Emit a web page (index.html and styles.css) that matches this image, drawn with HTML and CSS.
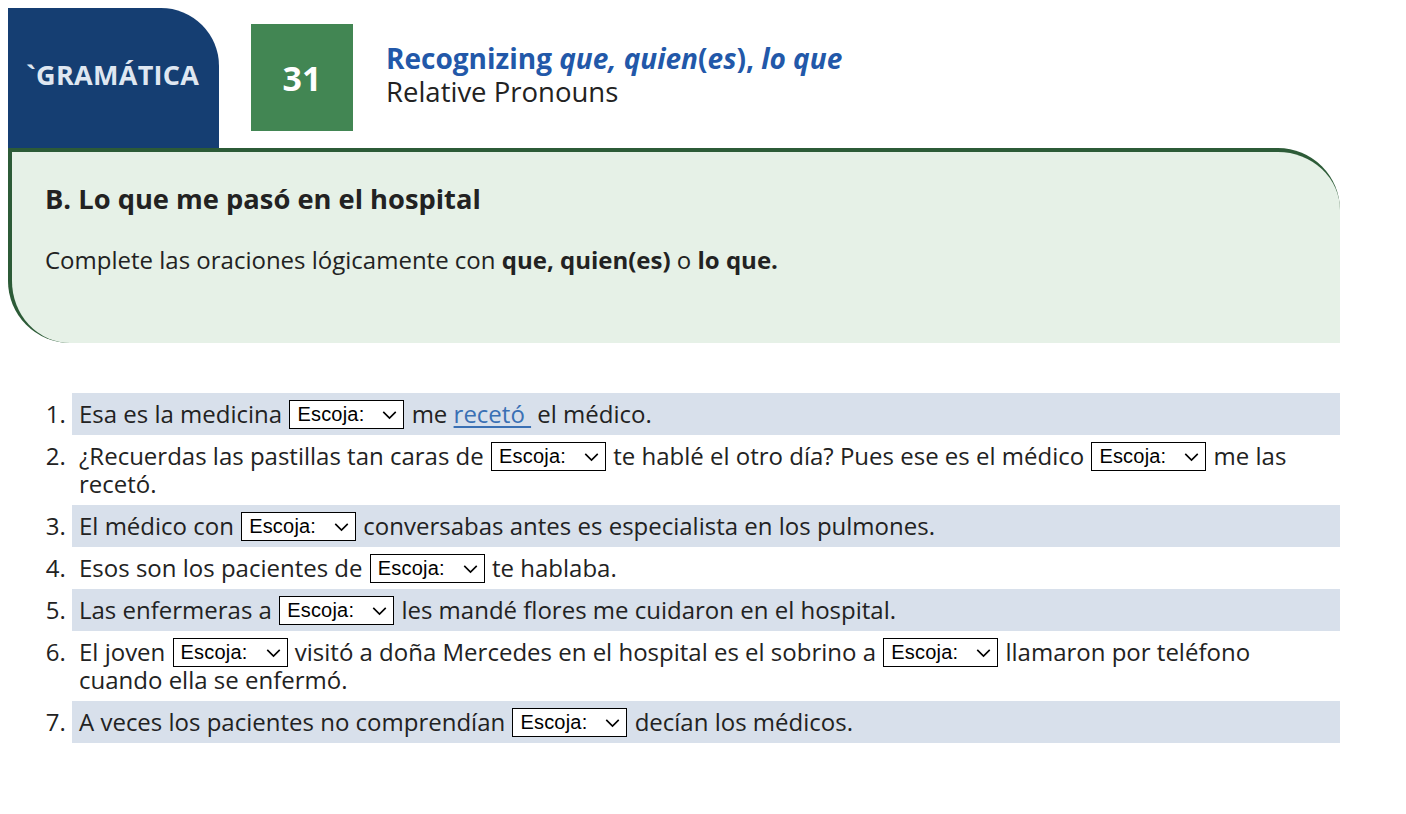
FILE: index.html
```html
<!DOCTYPE html>
<html lang="es">
<head>
<meta charset="utf-8">
<title>Gramática 31</title>
<link rel="stylesheet" href="styles.css">
</head>
<body>
<header class="hdr">
  <div class="tab"><span>`GRAMÁTICA</span></div>
  <div class="num">31</div>
  <div class="titles">
    <div class="t1">Recognizing <em>que, quien</em>(<em>es</em>), <em>lo que</em></div>
    <div class="t2">Relative Pronouns</div>
  </div>
</header>
<section class="box">
  <h2>B. Lo que me pasó en el hospital</h2>
  <p>Complete las oraciones lógicamente con <b>que, quien(es)</b> o <b>lo que.</b></p>
</section>
<ol class="items">
  <li class="alt">Esa es la medicina <span class="sel"><select><option>Escoja:</option><option>que</option><option>quien</option><option>quienes</option><option>lo que</option></select><svg viewBox="0 0 12 8"><path d="M1 1.5 6 6.5 11 1.5"/></svg></span> me <a href="#">recetó&nbsp;</a> el médico.</li>
  <li>¿Recuerdas las pastillas tan caras de <span class="sel"><select><option>Escoja:</option></select><svg viewBox="0 0 12 8"><path d="M1 1.5 6 6.5 11 1.5"/></svg></span> te hablé el otro día? Pues ese es el médico <span class="sel"><select><option>Escoja:</option></select><svg viewBox="0 0 12 8"><path d="M1 1.5 6 6.5 11 1.5"/></svg></span> me las recetó.</li>
  <li class="alt">El médico con <span class="sel"><select><option>Escoja:</option></select><svg viewBox="0 0 12 8"><path d="M1 1.5 6 6.5 11 1.5"/></svg></span> conversabas antes es especialista en los pulmones.</li>
  <li>Esos son los pacientes de <span class="sel"><select><option>Escoja:</option></select><svg viewBox="0 0 12 8"><path d="M1 1.5 6 6.5 11 1.5"/></svg></span> te hablaba.</li>
  <li class="alt">Las enfermeras a <span class="sel"><select><option>Escoja:</option></select><svg viewBox="0 0 12 8"><path d="M1 1.5 6 6.5 11 1.5"/></svg></span> les mandé flores me cuidaron en el hospital.</li>
  <li>El joven <span class="sel"><select><option>Escoja:</option></select><svg viewBox="0 0 12 8"><path d="M1 1.5 6 6.5 11 1.5"/></svg></span> visitó a doña Mercedes en el hospital es el sobrino a <span class="sel"><select><option>Escoja:</option></select><svg viewBox="0 0 12 8"><path d="M1 1.5 6 6.5 11 1.5"/></svg></span> llamaron por teléfono cuando ella se enfermó.</li>
  <li class="alt">A veces los pacientes no comprendían <span class="sel"><select><option>Escoja:</option></select><svg viewBox="0 0 12 8"><path d="M1 1.5 6 6.5 11 1.5"/></svg></span> decían los médicos.</li>
</ol>
</body>
</html>
```
FILE: styles.css
```css
html, body {
  background: #ffffff;
}
body {
  margin: 8px;
  width: 1332px;
  font-family: "Open Sans", "Noto Sans", sans-serif;
  color: #222222;
}
.hdr {
  display: flex;
  align-items: flex-start;
  height: 140px;
}
.tab {
  width: 211px;
  height: 140px;
  background: #153e72;
  border-top-right-radius: 58px;
  display: flex;
  align-items: flex-start;
  padding-top: 50px;
  padding-left: 18px;
  box-sizing: border-box;
}
.tab span {
  color: #dfe7f1;
  font-weight: 700;
  font-size: 27px;
  letter-spacing: 0.3px;
  line-height: 34px;
}
.num {
  margin-left: 32px;
  margin-top: 16px;
  width: 102px;
  height: 107px;
  background: #428653;
  color: #ffffff;
  font-weight: 700;
  font-size: 34px;
  display: flex;
  align-items: center;
  justify-content: center;
}
.titles {
  margin-left: 33px;
  margin-top: 34px;
  line-height: 33px;
}
.t1 {
  color: #2258a9;
  font-weight: 700;
  font-size: 28px;
}
.t1 em {
  font-style: italic;
}
.t2 {
  color: #222222;
  font-size: 27.5px;
}
.box {
  height: 195px;
  box-sizing: border-box;
  background: #e6f1e7;
  border-top: 4px solid #2c5b37;
  border-left: 4px solid #2c5b37;
  border-top-right-radius: 62px;
  border-bottom-left-radius: 62px;
  padding: 30px 33px 0 33px;
}
.box h2 {
  margin: 0;
  font-size: 27.3px;
  line-height: 34px;
  font-weight: 700;
  color: #222222;
}
.box p {
  margin: 30px 0 0 0;
  font-size: 24px;
  line-height: 28px;
}
.box p b {
  font-weight: 700;
}
.items {
  margin: 50px 0 0 0;
  padding: 0 0 0 64px;
  font-size: 24px;
  line-height: 28px;
}
.items li {
  padding: 7px 30px 7px 7px;
}
.items li.alt {
  background: #d8e0eb;
}
.items a {
  color: #3a70b4;
  text-decoration: underline;
  text-underline-offset: 3px;
}
.sel {
  position: relative;
  display: inline-block;
  vertical-align: middle;
  margin: -6px 1px -2px;
  line-height: 0;
}
.sel select {
  appearance: none;
  -webkit-appearance: none;
  width: 115px;
  height: 29px;
  box-sizing: border-box;
  border: 1px solid #000000;
  border-radius: 0;
  background: #ffffff;
  color: #000000;
  font-family: "Liberation Sans", Arial, sans-serif;
  font-size: 20px;
  letter-spacing: 0.2px;
  padding: 0 0 1px 7px;
  margin: 0;
  display: block;
}
.sel svg {
  position: absolute;
  right: 7px;
  top: 10px;
  width: 15px;
  height: 10px;
  fill: none;
  stroke: #000000;
  stroke-width: 1.3;
  pointer-events: none;
}
```
